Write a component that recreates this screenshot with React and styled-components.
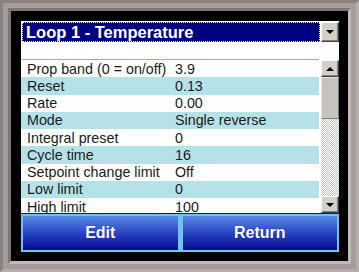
import React from 'react';
import styled, { createGlobalStyle } from 'styled-components';

const GlobalStyle = createGlobalStyle`
  html, body {
    margin: 0;
    padding: 0;
    background: #a59d9b;
  }
  body {
    font-family: 'Liberation Sans', Arial, sans-serif;
  }
`;

const rows = [
  { label: 'Prop band (0 = on/off)', value: '3.9' },
  { label: 'Reset', value: '0.13' },
  { label: 'Rate', value: '0.00' },
  { label: 'Mode', value: 'Single reverse' },
  { label: 'Integral preset', value: '0' },
  { label: 'Cycle time', value: '16' },
  { label: 'Setpoint change limit', value: 'Off' },
  { label: 'Low limit', value: '0' },
  { label: 'High limit', value: '100' },
];

function App() {
  return (
    <>
      <GlobalStyle />
      <Bezel>
        <InnerBevel>
          <Screen>
            <Panel>
              <Combo>
                <Selected>
                  <span>Loop 1 - Temperature</span>
                </Selected>
                <ArrowButton>
                  <Triangle $down />
                </ArrowButton>
              </Combo>
              <Blank />
              <ListArea>
                <Rows>
                  {rows.map((r, i) => (
                    <Row key={r.label} $alt={i % 2 === 1}>
                      <Label>{r.label}</Label>
                      <Value>{r.value}</Value>
                    </Row>
                  ))}
                </Rows>
                <Scrollbar>
                  <ArrowButton $tall>
                    <Triangle />
                  </ArrowButton>
                  <Thumb />
                  <Track />
                  <ArrowButton $tall>
                    <Triangle $down />
                  </ArrowButton>
                </Scrollbar>
              </ListArea>
              <ButtonRow>
                <ActionButton>Edit</ActionButton>
                <ActionButton>Return</ActionButton>
              </ButtonRow>
            </Panel>
          </Screen>
        </InnerBevel>
      </Bezel>
    </>
  );
}

export default App;

const Bezel = styled.div`
  width: 359px;
  height: 272px;
  box-sizing: border-box;
  background: #a59d9b;
  border: 3px solid;
  border-color: #8a8280 #b6aeac #b6aeac #8a8280;
  padding: 5px;
`;

const InnerBevel = styled.div`
  height: 100%;
  box-sizing: border-box;
  border: 3px solid;
  border-color: #7f7775 #c2bab8 #c2bab8 #7f7775;
`;

const Screen = styled.div`
  height: 100%;
  box-sizing: border-box;
  background: #000;
  padding: 10px 9px 9px 10px;
`;

const Panel = styled.div`
  height: 100%;
  background: #fff;
  display: flex;
  flex-direction: column;
  overflow: hidden;
`;

const Combo = styled.div`
  display: flex;
  gap: 1px;
  padding: 1px 0 0 1px;
  box-sizing: border-box;
  height: 21px;
`;

const Selected = styled.div`
  flex: 1;
  background: #000080;
  outline: 1px dotted #fff;
  outline-offset: -1px;
  display: flex;
  align-items: center;
  padding-left: 4px;
  span {
    color: #fff;
    font-weight: 700;
    font-size: 16.5px;
  }
`;

const ArrowButton = styled.div`
  width: 18px;
  height: ${(p) => (p.$tall ? '17px' : '20px')};
  box-sizing: border-box;
  background: #d4d0c8;
  border: 1px solid;
  border-color: #ffffff #404040 #404040 #ffffff;
  box-shadow: inset -1px -1px 0 #808080;
  display: flex;
  align-items: center;
  justify-content: center;
  flex-shrink: 0;
`;

const Triangle = styled.div`
  width: 0;
  height: 0;
  border-left: 4px solid transparent;
  border-right: 4px solid transparent;
  ${(p) =>
    p.$down
      ? 'border-top: 4px solid #000;'
      : 'border-bottom: 4px solid #000;'}
`;

const Blank = styled.div`
  height: 17px;
`;

const ListArea = styled.div`
  display: grid;
  grid-template-columns: 1fr 18px;
  column-gap: 2px;
  height: 154px;
`;

const Rows = styled.div`
  border-top: 1px solid #a8a8a8;
  overflow: hidden;
`;

const Row = styled.div`
  display: grid;
  grid-template-columns: 154px 1fr;
  height: 17.25px;
  align-items: center;
  background: ${(p) => (p.$alt ? '#b5e2e8' : '#ffffff')};
  font-size: 14.3px;
  color: #1a1a1a;
  white-space: nowrap;
`;

const Label = styled.div`
  padding-left: 6px;
`;

const Value = styled.div``;

const Scrollbar = styled.div`
  display: flex;
  flex-direction: column;
  padding-top: 1px;
`;

const Thumb = styled.div`
  height: 42px;
  box-sizing: border-box;
  background: #c6c2be;
  border: 1px solid;
  border-color: #e8e6e2 #7c7c7c #7c7c7c #e8e6e2;
`;

const Track = styled.div`
  flex: 1;
  background-color: #ffffff;
  background-image: repeating-conic-gradient(#c8c4c0 0 25%, #ffffff 0 50%);
  background-size: 2px 2px;
`;

const ButtonRow = styled.div`
  display: grid;
  grid-template-columns: 1fr 1fr;
  gap: 1px;
  border-top: 1px solid #202020;
  background: #6fc3ee;
  flex: 1;
`;

const ActionButton = styled.div`
  border: 2px solid #6fc3ee;
  border-radius: 2px;
  background: linear-gradient(#5b8ae6, #2a44c4 50%, #000c8c);
  color: #fff;
  font-weight: 700;
  font-size: 16px;
  display: flex;
  align-items: center;
  justify-content: center;
  text-shadow: 0 0 1px #0a1a80;
`;
